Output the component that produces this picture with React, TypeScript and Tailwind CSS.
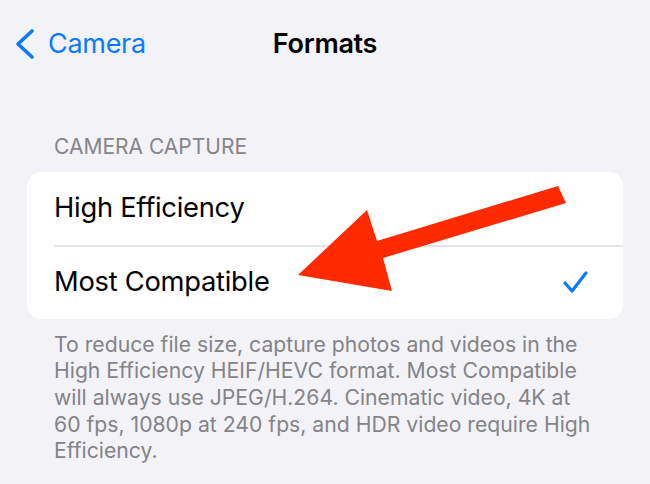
import React from "react";

const footerLines = [
  "To reduce file size, capture photos and videos in the",
  "High Efficiency HEIF/HEVC format. Most Compatible",
  "will always use JPEG/H.264. Cinematic video, 4K at",
  "60 fps, 1080p at 240 fps, and HDR video require High",
  "Efficiency.",
];

export default function App() {
  return (
    <div
      className="relative w-[650px] h-[484px] overflow-hidden bg-[#f2f2f7]"
      style={{ fontFamily: "Inter, 'Noto Sans', sans-serif" }}
    >
      {/* Nav bar */}
      <div className="relative h-[88px] flex items-center">
        <div className="flex items-center pl-[14px] text-[#0a7aff]">
          <svg width="22" height="30" viewBox="0 0 22 30" className="mr-[12px]">
            <path
              d="M18 2 L4 15 L18 28"
              fill="none"
              stroke="#0a7aff"
              strokeWidth="3.6"
              strokeLinecap="round"
              strokeLinejoin="round"
            />
          </svg>
          <span className="text-[27px] tracking-[-0.3px]">Camera</span>
        </div>
        <div className="absolute inset-0 flex items-center justify-center pointer-events-none">
          <span className="text-[27px] font-semibold text-black tracking-[-0.3px]">Formats</span>
        </div>
      </div>

      {/* Section header */}
      <div className="pt-[47px] pl-[54px] pb-[13px] text-[21px] leading-[24px] text-[#858589]">
        CAMERA CAPTURE
      </div>

      {/* Card */}
      <div className="ml-[27px] w-[596px] rounded-[14px] bg-white">
        <div className="h-[73px] flex items-center pl-[27px] text-[27.3px] text-black tracking-[-0.25px]">
          High Efficiency
        </div>
        <div className="ml-[27px] h-[1.5px] bg-[#e4e4e8]" />
        <div className="h-[72px] flex items-center justify-between pl-[27px] pr-[33px] text-[27.3px] text-black tracking-[-0.25px]">
          <span>Most Compatible</span>
          <svg width="28" height="26" viewBox="0 0 28 26">
            <path
              d="M3 13 L10 21 L24 3"
              fill="none"
              stroke="#0a7aff"
              strokeWidth="3.2"
              strokeLinecap="round"
              strokeLinejoin="round"
            />
          </svg>
        </div>
      </div>

      {/* Footer */}
      <div className="pt-[12px] pl-[54px] flex flex-col text-[21.2px] leading-[26.7px] text-[#838388]">
        {footerLines.map((l, i) => (
          <span key={i} className="whitespace-nowrap">
            {l}
          </span>
        ))}
      </div>

      {/* Red arrow annotation */}
      <svg
        className="absolute left-0 top-0 pointer-events-none"
        width="650"
        height="484"
        viewBox="0 0 650 484"
      >
        <polygon
          points="558,186 566,203 383,258 392,291 298,275 367,210 377,241"
          fill="#ff2a00"
        />
      </svg>
    </div>
  );
}
